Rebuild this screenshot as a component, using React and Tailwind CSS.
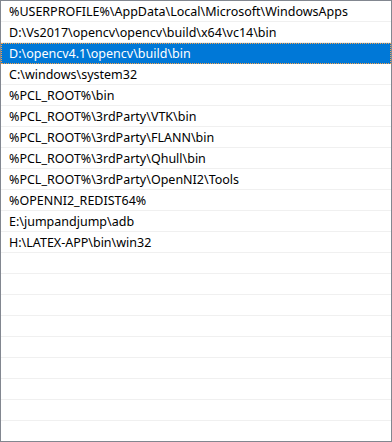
import React from 'react'

const paths = [
  '%USERPROFILE%\\AppData\\Local\\Microsoft\\WindowsApps',
  'D:\\Vs2017\\opencv\\opencv\\build\\x64\\vc14\\bin',
  'D:\\opencv4.1\\opencv\\build\\bin',
  'C:\\windows\\system32',
  '%PCL_ROOT%\\bin',
  '%PCL_ROOT%\\3rdParty\\VTK\\bin',
  '%PCL_ROOT%\\3rdParty\\FLANN\\bin',
  '%PCL_ROOT%\\3rdParty\\Qhull\\bin',
  '%PCL_ROOT%\\3rdParty\\OpenNI2\\Tools',
  '%OPENNI2_REDIST64%',
  'E:\\jumpandjump\\adb',
  'H:\\LATEX-APP\\bin\\win32',
]

const rows = [...paths, ...Array(10).fill('')]

export default function App() {
  return (
    <div className="w-[392px] h-[442px] bg-white border border-[#828790] overflow-hidden" style={{ fontFamily: '"Noto Sans", "Liberation Sans", sans-serif' }}>
      {rows.map((p, i) => {
        const selected = i === 2
        return (
          <div key={i} className="h-[21px] border-b border-[#f0f0f0]">
            {selected ? (
              <div className="h-[21px] bg-[#0078d7] border border-dotted border-[#f7a24a] text-white text-[12.5px] leading-[20px] pl-[7px] whitespace-nowrap">
                {p}
              </div>
            ) : (
              <div className="h-[20px] text-black text-[12.5px] leading-[22px] pl-2 whitespace-nowrap">{p}</div>
            )}
          </div>
        )
      })}
    </div>
  )
}
